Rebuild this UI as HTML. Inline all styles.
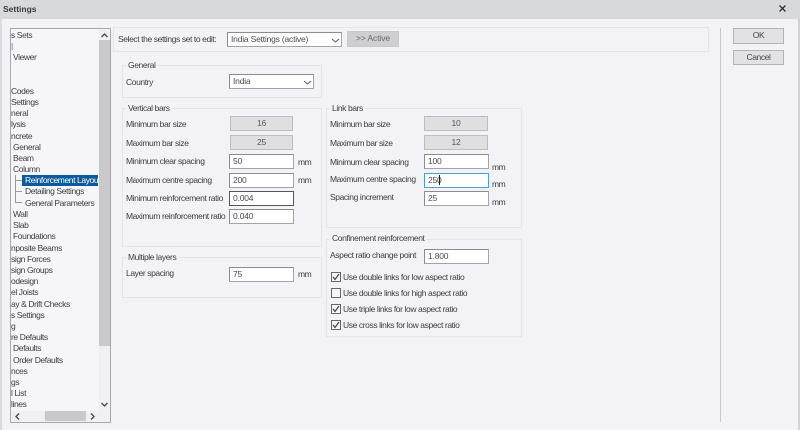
<!DOCTYPE html>
<html><head><meta charset="utf-8"><style>
html,body{margin:0;padding:0;background:#f2f2f7}
body{width:800px;height:430px;overflow:hidden;position:relative;font-family:"Liberation Sans",sans-serif;font-size:8.5px;letter-spacing:-.4px;color:#3c3d44}
div,span{position:absolute;box-sizing:border-box}
#w{left:0;top:0;width:800px;height:430px;overflow:hidden;filter:blur(.35px)}
.t{white-space:nowrap;line-height:12px;height:12px}
.g{border:1px solid #e4e4e9}
.gl{background:#f2f2f7;padding:0 2px;white-space:nowrap;line-height:12px;height:12px}
.i{background:#fff;border:1.5px solid #a4a4a6;border-top-color:#8c8c8e;border-left-color:#8c8c8e;padding-left:3px;line-height:12px;color:#4a4b52;white-space:nowrap;letter-spacing:-.2px}
.d{background:#dfdfe0;border:1.5px solid #bdbdbf;text-align:center;line-height:12px;color:#55565c;letter-spacing:-.2px}
.b{background:#e2e2e4;border:1.5px solid #b4b4b6;text-align:center;line-height:12px;color:#44454a}
.c{width:10px;height:10px;left:331px;background:#f6f6f8;border:1px solid #66676c}
#tr span.t{margin-top:-1px}
</style></head><body><div id="w">
<div style="left:0;top:0;width:800px;height:19px;background:#d8d9dc"></div>
<div class="t" style="left:3px;top:3px;font-weight:bold;color:#3a3b42;font-size:8.5px;letter-spacing:0">Settings</div>
<svg style="position:absolute;left:778px;top:4px" width="9" height="9" viewBox="0 0 9 9"><path d="M1.500 1.500L7.500 7.500M7.500 1.500L1.500 7.500" stroke="#33343a" stroke-width="1.4"/></svg>
<div style="left:0;top:19px;width:1.5px;height:411px;background:#dcdce0"></div>
<div style="left:797.5px;top:19px;width:2.5px;height:411px;background:#d2d2d6"></div>

<!-- tree -->
<div style="left:10px;top:28px;width:101px;height:395px;background:#f6f6fa;border:1px solid #a8a8ac;overflow:hidden">
 <div id="tr" class="t" style="left:0;top:0;width:88px;height:392px;overflow:hidden">
  <span class="t" style="left:0;top:1px">s Sets</span>
  <span class="t" style="left:0;top:12px;color:#4a78b8">|</span>
  <span class="t" style="left:2px;top:23px">Viewer</span>
  <span class="t" style="left:0;top:57px">Codes</span>
  <span class="t" style="left:0;top:68px">Settings</span>
  <span class="t" style="left:0;top:79px">neral</span>
  <span class="t" style="left:0;top:90px">lysis</span>
  <span class="t" style="left:0;top:102px">ncrete</span>
  <span class="t" style="left:2px;top:113px">General</span>
  <span class="t" style="left:2px;top:124px">Beam</span>
  <span class="t" style="left:2px;top:135px">Column</span>
  <span style="left:11px;top:146px;width:76px;height:11px;background:#0a5a9e"></span>
  <span class="t" style="left:14px;top:146px;color:#fff;width:73px;overflow:hidden">Reinforcement Layout</span>
  <span style="left:4px;top:146px;width:1px;height:28px;background:#9a9a9e"></span>
  <span style="left:4px;top:151px;width:7px;height:1px;background:#9a9a9e"></span>
  <span style="left:4px;top:162px;width:7px;height:1px;background:#9a9a9e"></span>
  <span style="left:4px;top:173px;width:7px;height:1px;background:#9a9a9e"></span>
  <span class="t" style="left:14px;top:157px">Detailing Settings</span>
  <span class="t" style="left:14px;top:169px">General Parameters</span>
  <span class="t" style="left:2px;top:180px">Wall</span>
  <span class="t" style="left:2px;top:191px">Slab</span>
  <span class="t" style="left:2px;top:202px">Foundations</span>
  <span class="t" style="left:0;top:214px">nposite Beams</span>
  <span class="t" style="left:0;top:225px">sign Forces</span>
  <span class="t" style="left:0;top:236px">sign Groups</span>
  <span class="t" style="left:0;top:247px">odesign</span>
  <span class="t" style="left:0;top:258px">el Joists</span>
  <span class="t" style="left:0;top:270px">ay &amp; Drift Checks</span>
  <span class="t" style="left:0;top:281px">s Settings</span>
  <span class="t" style="left:0;top:292px">g</span>
  <span class="t" style="left:0;top:303px">re Defaults</span>
  <span class="t" style="left:2px;top:314px">Defaults</span>
  <span class="t" style="left:2px;top:326px">Order Defaults</span>
  <span class="t" style="left:0;top:337px">nces</span>
  <span class="t" style="left:0;top:348px">gs</span>
  <span class="t" style="left:0;top:359px">l List</span>
  <span class="t" style="left:0;top:370px">lines</span>
 </div>
 <!-- v scrollbar -->
 <span style="left:88px;top:0;width:11px;height:382px;background:#f0f0f4"></span>
 <span style="left:88px;top:11px;width:11px;height:306px;background:#c9c9cb"></span>
 <svg style="position:absolute;left:89px;top:3px" width="9" height="7" viewBox="0 0 9 7"><path d="M1.500 5L4.500 2L7.500 5" stroke="#44454a" stroke-width="1.3" fill="none"/></svg>
 <svg style="position:absolute;left:89px;top:372px" width="9" height="7" viewBox="0 0 9 7"><path d="M1.500 2L4.500 5L7.500 2" stroke="#44454a" stroke-width="1.3" fill="none"/></svg>
 <!-- h scrollbar -->
 <span style="left:0;top:382px;width:99px;height:11px;background:#f0f0f4"></span>
 <span style="left:34px;top:382px;width:41px;height:10px;background:#c9c9cb"></span>
 <svg style="position:absolute;left:3px;top:383px" width="7" height="9" viewBox="0 0 7 9"><path d="M5 1.500L2 4.500L5 7.500" stroke="#44454a" stroke-width="1.3" fill="none"/></svg>
 <svg style="position:absolute;left:78px;top:383px" width="7" height="9" viewBox="0 0 7 9"><path d="M2 1.500L5 4.500L2 7.500" stroke="#44454a" stroke-width="1.3" fill="none"/></svg>
</div>

<!-- top panel -->
<div class="g" style="left:113px;top:27px;width:596px;height:25px"></div>
<div class="t" style="left:118px;top:33px">Select the settings set to edit:</div>
<div class="i" style="left:227px;top:32px;width:115px;height:15px">India Settings (active)</div>
<svg style="position:absolute;left:331px;top:37px" width="9" height="7" viewBox="0 0 9 7"><path d="M1 2L4.500 5L8 2" stroke="#55565c" fill="none"/></svg>
<div class="b" style="left:347px;top:31px;width:52px;height:16px;background:#cfcfd1;border-color:#c8c8ca;color:#66676c;letter-spacing:-.1px">&gt;&gt; Active</div>

<!-- General -->
<div class="g" style="left:122px;top:65px;width:200px;height:33px"></div>
<div class="gl" style="left:126px;top:59px">General</div>
<div class="t" style="left:126px;top:76px">Country</div>
<div class="i" style="left:229px;top:74px;width:85px;height:15px">India</div>
<svg style="position:absolute;left:303px;top:79px" width="9" height="7" viewBox="0 0 9 7"><path d="M1 2L4.500 5L8 2" stroke="#55565c" fill="none"/></svg>

<!-- Vertical bars -->
<div class="g" style="left:122px;top:108px;width:200px;height:139px"></div>
<div class="gl" style="left:126px;top:102px">Vertical bars</div>
<div class="t" style="left:126px;top:118px">Minimum bar size</div>
<div class="d" style="left:230px;top:116px;width:63px;height:15px">16</div>
<div class="t" style="left:126px;top:137px">Maximum bar size</div>
<div class="d" style="left:230px;top:135px;width:63px;height:15px">25</div>
<div class="t" style="left:126px;top:155px">Minimum clear spacing</div>
<div class="i" style="left:229px;top:154px;width:65px;height:15px">50</div>
<div class="t" style="left:298px;top:156px">mm</div>
<div class="t" style="left:126px;top:174px">Maximum centre spacing</div>
<div class="i" style="left:229px;top:173px;width:65px;height:15px">200</div>
<div class="t" style="left:298px;top:174px">mm</div>
<div class="t" style="left:126px;top:192px">Minimum reinforcement ratio</div>
<div class="i" style="left:229px;top:191px;width:65px;height:15px;border-color:#55565a">0.004</div>
<div class="t" style="left:126px;top:210px">Maximum reinforcement ratio</div>
<div class="i" style="left:229px;top:209px;width:65px;height:15px">0.040</div>

<!-- Multiple layers -->
<div class="g" style="left:122px;top:257px;width:200px;height:41px"></div>
<div class="gl" style="left:126px;top:251px">Multiple layers</div>
<div class="t" style="left:126px;top:267px">Layer spacing</div>
<div class="i" style="left:229px;top:267px;width:65px;height:15px">75</div>
<div class="t" style="left:298px;top:268px">mm</div>

<!-- Link bars -->
<div class="g" style="left:326px;top:108px;width:196px;height:120px"></div>
<div class="gl" style="left:330px;top:102px">Link bars</div>
<div class="t" style="left:330px;top:118px">Minimum bar size</div>
<div class="d" style="left:424px;top:116px;width:64px;height:15px">10</div>
<div class="t" style="left:330px;top:137px">Maximum bar size</div>
<div class="d" style="left:424px;top:135px;width:64px;height:15px">12</div>
<div class="t" style="left:330px;top:156px">Minimum clear spacing</div>
<div class="i" style="left:424px;top:154px;width:65px;height:15px">100</div>
<div class="t" style="left:492px;top:161px">mm</div>
<div class="t" style="left:330px;top:173px">Maximum centre spacing</div>
<div class="i" style="left:424px;top:173px;width:65px;height:15px;border-color:#4a9ede">250<span style="left:13.500px;top:1px;width:1px;height:10px;background:#222"></span></div>
<div class="t" style="left:492px;top:178px">mm</div>
<div class="t" style="left:330px;top:191px">Spacing increment</div>
<div class="i" style="left:424px;top:191px;width:65px;height:15px">25</div>
<div class="t" style="left:492px;top:196px">mm</div>

<!-- Confinement -->
<div class="g" style="left:326px;top:239px;width:196px;height:98px"></div>
<div class="gl" style="left:330px;top:232px">Confinement reinforcement</div>
<div class="t" style="left:330px;top:249px">Aspect ratio change point</div>
<div class="i" style="left:424px;top:249px;width:65px;height:15px">1.800</div>

<div class="c" style="top:272px"></div><svg style="position:absolute;left:332px;top:273px" width="8" height="8" viewBox="0 0 8 8"><path d="M1 4L3 6.500L7 1" stroke="#44454a" stroke-width="1.2" fill="none"/></svg>
<div class="t" style="left:343px;top:271px">Use double links for low aspect ratio</div>
<div class="c" style="top:288px"></div>
<div class="t" style="left:343px;top:287px">Use double links for high aspect ratio</div>
<div class="c" style="top:304px"></div><svg style="position:absolute;left:332px;top:305px" width="8" height="8" viewBox="0 0 8 8"><path d="M1 4L3 6.500L7 1" stroke="#44454a" stroke-width="1.2" fill="none"/></svg>
<div class="t" style="left:343px;top:303px">Use triple links for low aspect ratio</div>
<div class="c" style="top:320px"></div><svg style="position:absolute;left:332px;top:321px" width="8" height="8" viewBox="0 0 8 8"><path d="M1 4L3 6.500L7 1" stroke="#44454a" stroke-width="1.2" fill="none"/></svg>
<div class="t" style="left:343px;top:319px">Use cross links for low aspect ratio</div>

<!-- Right -->
<div style="left:719.500px;top:28px;width:1.500px;height:394px;background:#c8c8cb"></div>
<div class="b" style="left:733px;top:28px;width:51px;height:16px">OK</div>
<div class="b" style="left:733px;top:50px;width:51px;height:15px">Cancel</div>
</div></body></html>
